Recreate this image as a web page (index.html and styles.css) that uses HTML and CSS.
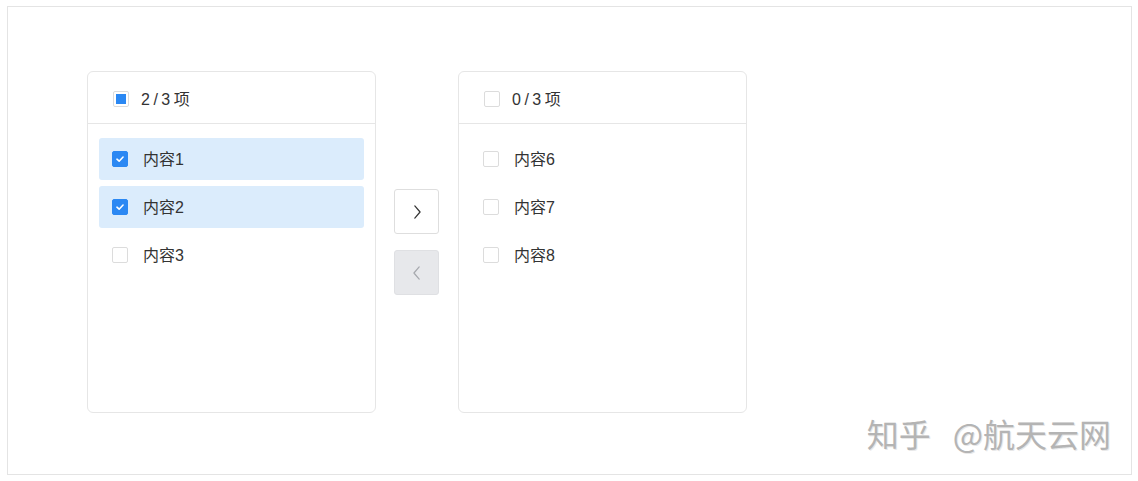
FILE: index.html
```html
<!DOCTYPE html>
<html lang="zh">
<head>
<meta charset="utf-8">
<link rel="stylesheet" href="styles.css">
</head>
<body>
<div class="frame">
  <div class="transfer">
    <div class="panel">
      <div class="panel-head">
        <span class="cb cb-indeterminate"></span>
        <span class="head-text">2/3项</span>
      </div>
      <div class="panel-body">
        <div class="item item-checked"><span class="cb cb-checked"><svg viewBox="0 0 16 16" width="16" height="16"><path d="M4.5 8.2 L7 10.5 L11.5 5.8" fill="none" stroke="#fff" stroke-width="1.8" stroke-linecap="round" stroke-linejoin="round"/></svg></span><span class="item-text">内容1</span></div>
        <div class="item item-checked"><span class="cb cb-checked"><svg viewBox="0 0 16 16" width="16" height="16"><path d="M4.5 8.2 L7 10.5 L11.5 5.8" fill="none" stroke="#fff" stroke-width="1.8" stroke-linecap="round" stroke-linejoin="round"/></svg></span><span class="item-text">内容2</span></div>
        <div class="item"><span class="cb"></span><span class="item-text">内容3</span></div>
      </div>
    </div>
    <div class="ops">
      <button class="op"><svg viewBox="0 0 16 16" width="16" height="16"><path d="M5.5 1 L11.5 8 L5.5 15" fill="none" stroke="#333" stroke-width="1.4" stroke-linecap="round" stroke-linejoin="round"/></svg></button>
      <button class="op op-disabled"><svg viewBox="0 0 16 16" width="16" height="16"><path d="M10.5 1 L4.5 8 L10.5 15" fill="none" stroke="#a6a8ad" stroke-width="1.4" stroke-linecap="round" stroke-linejoin="round"/></svg></button>
    </div>
    <div class="panel">
      <div class="panel-head">
        <span class="cb"></span>
        <span class="head-text">0/3项</span>
      </div>
      <div class="panel-body">
        <div class="item"><span class="cb"></span><span class="item-text">内容6</span></div>
        <div class="item"><span class="cb"></span><span class="item-text">内容7</span></div>
        <div class="item"><span class="cb"></span><span class="item-text">内容8</span></div>
      </div>
    </div>
  </div>
  <div class="watermark"><span>知乎</span><span>@航天云网</span></div>
</div>
</body>
</html>
```

FILE: styles.css
```css
* { box-sizing: border-box; }
body {
  margin: 0;
  background: #fff;
  font-family: "Liberation Sans", "Noto Sans CJK SC", sans-serif;
  color: #333;
}
.frame {
  position: relative;
  margin: 6px 0 0 7px;
  width: 1125px;
  height: 469px;
  border: 1px solid #e4e4e4;
  padding: 64px 0 0 79px;
}
.transfer {
  display: flex;
  align-items: center;
}
.panel {
  width: 289px;
  height: 342px;
  border: 1px solid #e6e6e6;
  border-radius: 6px;
  background: #fff;
}
.panel-head {
  height: 52px;
  border-bottom: 1px solid #e6e6e6;
  display: flex;
  align-items: center;
  padding: 3px 0 0 25px;
}
.head-text {
  margin-left: 12px;
  padding-top: 2px;
  font-size: 16px;
  letter-spacing: 3.5px;
  line-height: 20px;
}
.panel-body {
  padding: 14px 11px 0 11px;
}
.item {
  height: 42px;
  margin-bottom: 6px;
  border-radius: 3px;
  display: flex;
  align-items: center;
  padding-left: 13px;
}
.item-checked { background: #dbecfc; }
.item-text {
  margin-left: 15px;
  padding-top: 2px;
  font-size: 16px;
  line-height: 20px;
}
.cb {
  width: 16px;
  height: 16px;
  border: 1px solid #dcdcdc;
  border-radius: 2px;
  background: #fff;
  flex: none;
  display: flex;
  align-items: center;
  justify-content: center;
}
.cb-checked {
  background: #2b88f3;
  border-color: #2b88f3;
}
.cb-checked svg { display: block; }
.cb-indeterminate::after {
  content: "";
  width: 10px;
  height: 10px;
  background: #2b88f3;
}
.ops {
  width: 82px;
  display: flex;
  flex-direction: column;
  align-items: flex-start;
  gap: 16px;
  padding-left: 18px;
}
.op {
  width: 45px;
  height: 45px;
  border: 1px solid #dedede;
  border-radius: 3px;
  background: #fff;
  display: flex;
  align-items: center;
  justify-content: center;
  padding: 0;
}
.op svg { display: block; width: 14px; height: 16px; }
.op-disabled {
  background: #e7e8eb;
  border-color: #dfe0e3;
}
.watermark {
  position: absolute;
  right: 20px;
  bottom: 23px;
  display: flex;
  gap: 22px;
  font-family: "Noto Sans CJK SC", sans-serif;
  font-size: 32px;
  line-height: 36px;
  color: #b4b4b4;
  text-shadow: 1px 1px 0 #e8e8e8;
}
```
